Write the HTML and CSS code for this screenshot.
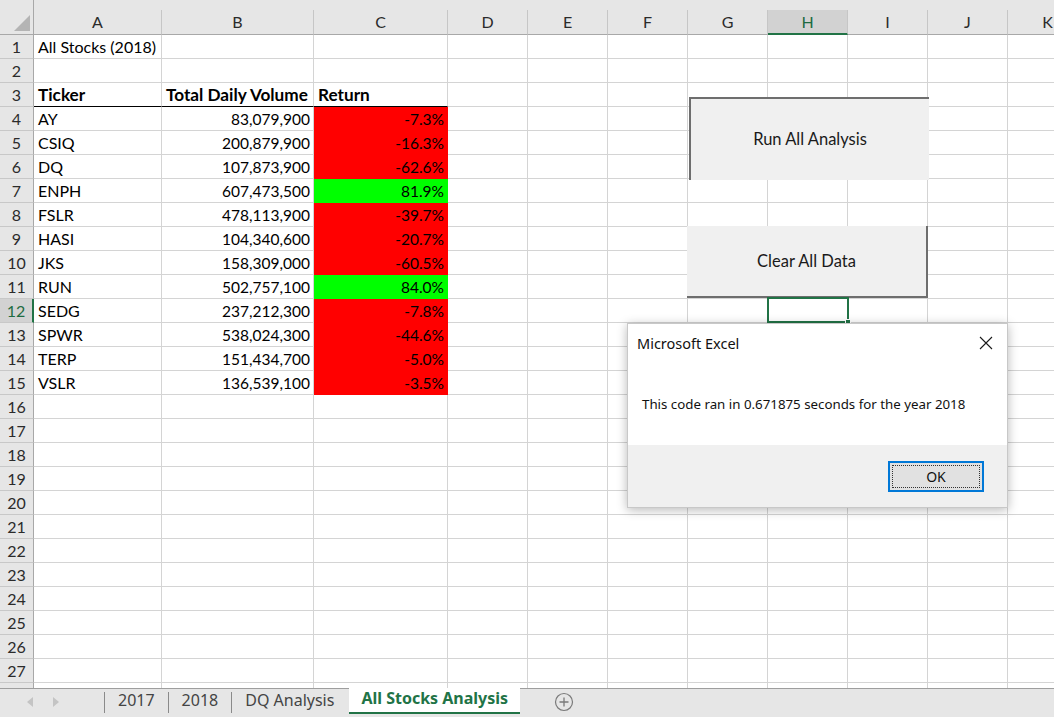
FILE: index.html
```html
<!DOCTYPE html>
<html>
<head>
<meta charset="utf-8">
<title>All Stocks Analysis</title>
<link rel="stylesheet" href="styles.css">
</head>
<body>
<div class="app">
  <div class="sheet">
    <div class="colhead">
      <div class="corner"><span class="tri"></span></div>
      <div class="ch">A</div><div class="ch">B</div><div class="ch">C</div><div class="ch">D</div><div class="ch">E</div><div class="ch">F</div><div class="ch">G</div><div class="ch sel">H</div><div class="ch">I</div><div class="ch">J</div><div class="ch">K</div>
    </div>
    <div class="row"><div class="rh">1</div><div>All Stocks (2018)</div><div></div><div></div><div></div><div></div><div></div><div></div><div></div><div></div><div></div><div></div></div>
    <div class="row"><div class="rh">2</div><div></div><div></div><div></div><div></div><div></div><div></div><div></div><div></div><div></div><div></div><div></div></div>
    <div class="row"><div class="rh">3</div><div class="hd">Ticker</div><div class="hd">Total Daily Volume</div><div class="hd">Return</div><div></div><div></div><div></div><div></div><div></div><div></div><div></div><div></div></div>
    <div class="row"><div class="rh">4</div><div>AY</div><div class="num">83,079,900</div><div class="num neg">-7.3%</div><div></div><div></div><div></div><div></div><div></div><div></div><div></div><div></div></div>
    <div class="row"><div class="rh">5</div><div>CSIQ</div><div class="num">200,879,900</div><div class="num neg">-16.3%</div><div></div><div></div><div></div><div></div><div></div><div></div><div></div><div></div></div>
    <div class="row"><div class="rh">6</div><div>DQ</div><div class="num">107,873,900</div><div class="num neg">-62.6%</div><div></div><div></div><div></div><div></div><div></div><div></div><div></div><div></div></div>
    <div class="row"><div class="rh">7</div><div>ENPH</div><div class="num">607,473,500</div><div class="num pos">81.9%</div><div></div><div></div><div></div><div></div><div></div><div></div><div></div><div></div></div>
    <div class="row"><div class="rh">8</div><div>FSLR</div><div class="num">478,113,900</div><div class="num neg">-39.7%</div><div></div><div></div><div></div><div></div><div></div><div></div><div></div><div></div></div>
    <div class="row"><div class="rh">9</div><div>HASI</div><div class="num">104,340,600</div><div class="num neg">-20.7%</div><div></div><div></div><div></div><div></div><div></div><div></div><div></div><div></div></div>
    <div class="row"><div class="rh">10</div><div>JKS</div><div class="num">158,309,000</div><div class="num neg">-60.5%</div><div></div><div></div><div></div><div></div><div></div><div></div><div></div><div></div></div>
    <div class="row"><div class="rh">11</div><div>RUN</div><div class="num">502,757,100</div><div class="num pos">84.0%</div><div></div><div></div><div></div><div></div><div></div><div></div><div></div><div></div></div>
    <div class="row"><div class="rh sel">12</div><div>SEDG</div><div class="num">237,212,300</div><div class="num neg">-7.8%</div><div></div><div></div><div></div><div></div><div></div><div></div><div></div><div></div></div>
    <div class="row"><div class="rh">13</div><div>SPWR</div><div class="num">538,024,300</div><div class="num neg">-44.6%</div><div></div><div></div><div></div><div></div><div></div><div></div><div></div><div></div></div>
    <div class="row"><div class="rh">14</div><div>TERP</div><div class="num">151,434,700</div><div class="num neg">-5.0%</div><div></div><div></div><div></div><div></div><div></div><div></div><div></div><div></div></div>
    <div class="row"><div class="rh">15</div><div>VSLR</div><div class="num">136,539,100</div><div class="num neg">-3.5%</div><div></div><div></div><div></div><div></div><div></div><div></div><div></div><div></div></div>
    <div class="row"><div class="rh">16</div><div></div><div></div><div></div><div></div><div></div><div></div><div></div><div></div><div></div><div></div><div></div></div>
    <div class="row"><div class="rh">17</div><div></div><div></div><div></div><div></div><div></div><div></div><div></div><div></div><div></div><div></div><div></div></div>
    <div class="row"><div class="rh">18</div><div></div><div></div><div></div><div></div><div></div><div></div><div></div><div></div><div></div><div></div><div></div></div>
    <div class="row"><div class="rh">19</div><div></div><div></div><div></div><div></div><div></div><div></div><div></div><div></div><div></div><div></div><div></div></div>
    <div class="row"><div class="rh">20</div><div></div><div></div><div></div><div></div><div></div><div></div><div></div><div></div><div></div><div></div><div></div></div>
    <div class="row"><div class="rh">21</div><div></div><div></div><div></div><div></div><div></div><div></div><div></div><div></div><div></div><div></div><div></div></div>
    <div class="row"><div class="rh">22</div><div></div><div></div><div></div><div></div><div></div><div></div><div></div><div></div><div></div><div></div><div></div></div>
    <div class="row"><div class="rh">23</div><div></div><div></div><div></div><div></div><div></div><div></div><div></div><div></div><div></div><div></div><div></div></div>
    <div class="row"><div class="rh">24</div><div></div><div></div><div></div><div></div><div></div><div></div><div></div><div></div><div></div><div></div><div></div></div>
    <div class="row"><div class="rh">25</div><div></div><div></div><div></div><div></div><div></div><div></div><div></div><div></div><div></div><div></div><div></div></div>
    <div class="row"><div class="rh">26</div><div></div><div></div><div></div><div></div><div></div><div></div><div></div><div></div><div></div><div></div><div></div></div>
    <div class="row"><div class="rh">27</div><div></div><div></div><div></div><div></div><div></div><div></div><div></div><div></div><div></div><div></div><div></div></div>
    <div class="row"><div class="rh"></div><div></div><div></div><div></div><div></div><div></div><div></div><div></div><div></div><div></div><div></div><div></div></div>
  </div>

  <div class="tabs">
    <div class="nav">
      <span class="arrow left"></span>
      <span class="arrow right"></span>
    </div>
    <span class="sep"></span>
    <div class="tab">2017</div>
    <span class="sep"></span>
    <div class="tab">2018</div>
    <span class="sep"></span>
    <div class="tab">DQ Analysis</div>
    <div class="tab active">All Stocks Analysis</div>
    <div class="add">
      <svg width="20" height="20" viewBox="0 0 20 20"><circle cx="10" cy="10" r="8.5" fill="none" stroke="#7a7a7a" stroke-width="1.2"/><path d="M10 5.5v9M5.5 10h9" stroke="#7a7a7a" stroke-width="1.3"/></svg>
    </div>
  </div>

  <div class="btn btn-run">Run All Analysis</div>
  <div class="btn btn-clear">Clear All Data</div>
  <div class="cellsel"><span class="handle"></span></div>

  <div class="dialog">
    <div class="dlg-head">
      <span class="dlg-title">Microsoft Excel</span>
      <svg class="dlg-close" width="14" height="14" viewBox="0 0 14 14"><path d="M1 1L13 13M13 1L1 13" stroke="#1a1a1a" stroke-width="1.1"/></svg>
    </div>
    <div class="dlg-body">This code ran in 0.671875 seconds for the year 2018</div>
    <div class="dlg-foot">
      <div class="okbtn"><span class="okinner">OK</span></div>
    </div>
  </div>
</div>
</body>
</html>
```

FILE: styles.css
```css
* { box-sizing: border-box; }
html, body { margin: 0; padding: 0; }
body {
  width: 1054px;
  height: 717px;
  overflow: hidden;
  background: #ffffff;
  font-family: "Lato", "Liberation Sans", sans-serif;
}
.app {
  position: relative;
  width: 1054px;
  height: 717px;
  overflow: hidden;
}
.sheet {
  height: 688px;
  overflow: hidden;
  background: #ffffff;
}
.colhead {
  display: grid;
  grid-template-columns: 34px 128px 152px 134px repeat(8, 80px);
  height: 35px;
  padding-top: 10px;
  background: #e6e6e6;
}
.corner {
  position: relative;
  border-right: 1px solid #a8a8a8;
  border-bottom: 1px solid #a8a8a8;
  margin-top: -10px;
  height: 35px;
}
.tri {
  position: absolute;
  right: 3px;
  bottom: 3px;
  width: 0;
  height: 0;
  border-left: 16px solid transparent;
  border-bottom: 16px solid #b4b4b4;
}
.ch {
  height: 25px;
  border-right: 1px solid #c6c6c6;
  border-bottom: 1px solid #a8a8a8;
  text-align: center;
  font-size: 16px;
  line-height: 24px;
  color: #2b2b2b;
}
.ch.sel {
  background: #d2d2d2;
  color: #1e6b41;
  border-bottom: 2px solid #217346;
  line-height: 23px;
}
.row {
  display: grid;
  grid-template-columns: 34px 128px 152px 134px repeat(8, 80px);
  height: 24px;
}
.row > div {
  height: 24px;
  border-right: 1px solid #d4d4d4;
  border-bottom: 1px solid #d4d4d4;
  padding: 0 4px;
  font-size: 16px;
  line-height: 24px;
  color: #000000;
  white-space: nowrap;
  overflow: visible;
}
.row > .rh {
  background: #e6e6e6;
  border-right: 1px solid #a8a8a8;
  border-bottom: 1px solid #c8c8c8;
  text-align: center;
  padding: 0;
  font-size: 16px;
  color: #2b2b2b;
}
.row > .rh.sel {
  background: #d2d2d2;
  color: #1e6b41;
  border-right: 2px solid #217346;
}
.row > .hd {
  font-weight: 700;
  font-size: 17.2px;
  border-bottom: 1px solid #000000;
}
.row > .num { text-align: right; padding-right: 3px; font-size: 15.5px; }
.row > .neg { background: #ff0000; border-color: #ff0000; }
.row > .pos { background: #00ff00; border-color: #00ff00; }

/* sheet tabs */
.tabs {
  display: flex;
  align-items: stretch;
  height: 29px;
  background: #e6e6e6;
  border-top: 1px solid #9e9e9e;
  font-family: "Noto Sans", "Open Sans", sans-serif;
  font-size: 16px;
  color: #444444;
}
.nav {
  display: flex;
  align-items: center;
  gap: 20px;
  width: 104px;
  padding-left: 27px;
  padding-bottom: 2px;
}
.arrow {
  width: 0;
  height: 0;
  border-top: 5px solid transparent;
  border-bottom: 5px solid transparent;
}
.arrow.left { border-right: 6px solid #c4c4c4; }
.arrow.right { border-left: 6px solid #c4c4c4; }
.sep {
  width: 1px;
  margin: 3px 0 4px;
  background: #8a8a8a;
}
.tab {
  display: flex;
  align-items: center;
  padding: 0 13px 7px;
  line-height: 22px;
}
.tab.active {
  margin-top: -1px;
  margin-left: 2px;
  padding: 0 12px 4px;
  background: #ffffff;
  color: #217346;
  font-weight: 700;
  border-bottom: 2px solid #217346;
  margin-bottom: 3px;
}
.add {
  display: flex;
  align-items: center;
  padding-left: 34px;
  padding-bottom: 3px;
}

/* form buttons (overlay on the sheet) */
.btn {
  position: absolute;
  display: flex;
  align-items: center;
  justify-content: center;
  background: #f0f0f0;
  font-family: "Lato", "Liberation Sans", sans-serif;
  font-size: 16.5px;
  color: #1a1a1a;
}
.btn-run {
  left: 689px;
  top: 97px;
  width: 240px;
  height: 83px;
  border-top: 2px solid #6e6e6e;
  border-left: 2px solid #6e6e6e;
  padding-bottom: 2px;
}
.btn-clear {
  left: 687px;
  top: 226px;
  width: 241px;
  height: 72px;
  border-right: 2px solid #6e6e6e;
  border-bottom: 2px solid #6e6e6e;
}
.cellsel {
  position: absolute;
  left: 767px;
  top: 297px;
  width: 82px;
  height: 26px;
  border: 2px solid #217346;
}
.handle {
  position: absolute;
  right: -4px;
  bottom: -4px;
  width: 6px;
  height: 6px;
  background: #217346;
  border: 1px solid #ffffff;
}

/* message box */
.dialog {
  position: absolute;
  left: 627px;
  top: 323px;
  width: 381px;
  height: 185px;
  display: flex;
  flex-direction: column;
  background: #ffffff;
  border: 1px solid #c8c8c8;
  box-shadow: 0 2px 10px rgba(0, 0, 0, 0.28);
  font-family: "Noto Sans", "Open Sans", sans-serif;
  color: #000000;
}
.dlg-head {
  display: flex;
  align-items: center;
  justify-content: space-between;
  height: 38px;
  padding: 0 14px 0 9px;
}
.dlg-title {
  font-size: 14.5px;
  color: #111111;
}
.dlg-body {
  flex: 1;
  display: flex;
  align-items: center;
  padding-left: 14px;
  font-size: 13.3px;
  color: #111111;
}
.dlg-foot {
  height: 62px;
  display: flex;
  align-items: center;
  justify-content: flex-end;
  padding-right: 23px;
  background: #f0f0f0;
}
.okbtn {
  width: 96px;
  height: 31px;
  padding: 2px;
  border: 2px solid #0078d7;
  background: #e1e1e1;
}
.okinner {
  display: flex;
  align-items: center;
  justify-content: center;
  height: 100%;
  border: 1px dotted #333333;
  font-size: 14px;
  color: #111111;
}
```
